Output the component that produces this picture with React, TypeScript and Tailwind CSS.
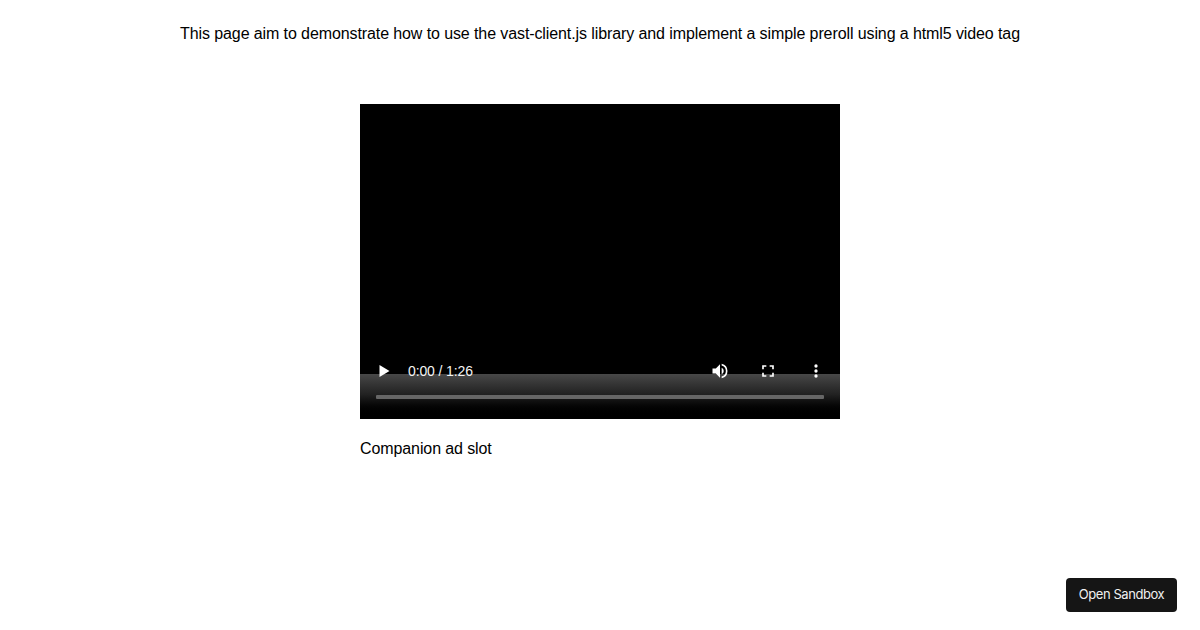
import React from "react";

export default function App() {
  return (
    <div className="relative h-[630px] w-[1200px] overflow-hidden bg-white text-black font-['Liberation_Sans',Arial,sans-serif] text-base tracking-[-0.1px]">
      <p className="pt-[25px] text-center leading-[18px]">
        This page aim to demonstrate how to use the vast-client.js library and implement a simple preroll using a html5 video tag
      </p>
      <div className="mx-auto mt-[61px] w-[480px]">
        <div className="relative flex h-[315px] w-[480px] flex-col justify-end bg-black pb-[20px] text-white">
          <div className="absolute inset-x-0 bottom-0 h-[45px] bg-gradient-to-b from-[#484848] via-[#222222] via-45% to-[#000000] to-95%" />
          <div className="relative flex h-[18px] items-center pl-[18px] pr-[14px] text-sm tracking-[-0.12px]">
            <svg className="h-[12px] w-[12px]" viewBox="0 0 12 12"><path d="M1.5 0 L11.5 6 L1.5 12 Z" fill="#fff" /></svg>
            <span className="ml-[18px] leading-[18px] text-[#f4f4f4]">0:00 / 1:26</span>
            <svg className="ml-auto h-[20px] w-[20px]" viewBox="0 0 24 24" fill="#fff"><path d="M3 9v6h4l5 5V4L7 9H3zm13.5 3A4.5 4.5 0 0 0 14 7.97v8.05A4.5 4.5 0 0 0 16.5 12zM14 3.23v2.06a7 7 0 0 1 0 13.42v2.06a9 9 0 0 0 0-17.54z" /></svg>
            <svg className="ml-[28px] h-[20px] w-[20px]" viewBox="0 0 24 24" fill="#fff"><path d="M7 14H5v5h5v-2H7v-3zm-2-4h2V7h3V5H5v5zm12 7h-3v2h5v-5h-2v3zM14 5v2h3v3h2V5h-5z" /></svg>
            <svg className="ml-[28px] h-[20px] w-[20px]" viewBox="0 0 24 24" fill="#fff"><circle cx="12" cy="6" r="2" /><circle cx="12" cy="12" r="2" /><circle cx="12" cy="18" r="2" /></svg>
          </div>
          <div className="relative mx-[16px] mt-[15px] h-[4px] rounded-[1px] bg-[#666666]" />
        </div>
        <p className="mt-[21px] leading-[18px]">Companion ad slot</p>
      </div>
      <button className="absolute right-[23px] bottom-[18px] h-[34px] w-[111px] rounded bg-[#151515] text-[13px] tracking-[-0.45px] text-[#f0f0f0] font-['Inter',sans-serif]">
        Open Sandbox
      </button>
    </div>
  );
}
